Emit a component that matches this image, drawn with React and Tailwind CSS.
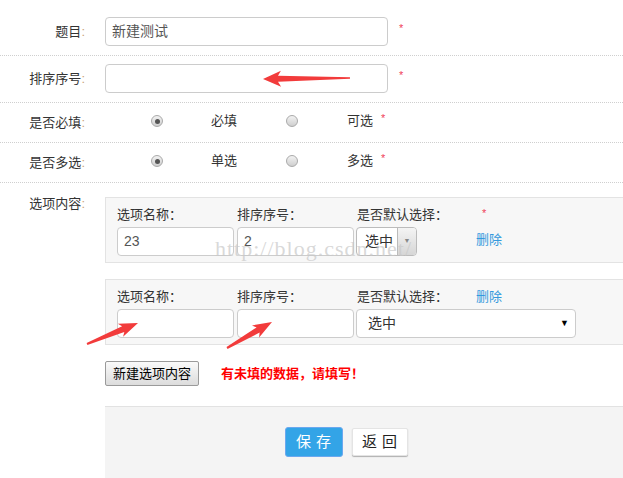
import React from "react";

// red annotation arrow, tail -> tip
function arrowPoints(x1, y1, x2, y2, headLen, headHalf, tailHalf, neckHalf) {
  const dx = x2 - x1;
  const dy = y2 - y1;
  const len = Math.hypot(dx, dy);
  const ux = dx / len;
  const uy = dy / len;
  const nx = -uy;
  const ny = ux;
  const bx = x2 - ux * headLen;
  const by = y2 - uy * headLen;
  const wx = bx - ux * 3;
  const wy = by - uy * 3;
  const p = [
    [x1 + nx * tailHalf, y1 + ny * tailHalf],
    [bx + nx * neckHalf, by + ny * neckHalf],
    [wx + nx * headHalf, wy + ny * headHalf],
    [x2, y2],
    [wx - nx * headHalf, wy - ny * headHalf],
    [bx - nx * neckHalf, by - ny * neckHalf],
    [x1 - nx * tailHalf, y1 - ny * tailHalf],
  ];
  return p.map(([x, y]) => `${x.toFixed(1)},${y.toFixed(1)}`).join(" ");
}

const Star = ({ className = "" }) => (
  <span className={`text-[11px] text-[#f0405a] leading-none ${className}`}>*</span>
);

const Label = ({ children }) => (
  <div className="w-[85px] shrink-0 text-right text-[13px] text-[#333]">
    {children}
    <span className="text-[#c9a27a]">:</span>
  </div>
);

const Radio = ({ checked, className = "" }) => (
  <span
    className={`flex items-center justify-center w-[12px] h-[12px] rounded-full border border-[#aaa] bg-gradient-to-b from-[#f2f2f2] to-[#cfcfcf] ${className}`}
  >
    {checked && <span className="w-[5px] h-[5px] rounded-full bg-[#555]" />}
  </span>
);

const TextBox = ({ value = "", className = "" }) => (
  <div
    className={`h-[29px] border border-[#ccc] rounded-[4px] bg-white flex items-center px-[6px] text-[14px] text-[#555] ${className}`}
  >
    {value}
  </div>
);

const OptionPanel = ({ first, a, b }) => (
  <div className="border border-[#e3e3e3] bg-[#f7f7f7] h-[66px] pl-[11px] pt-[8px]">
    <div className="flex h-[18px] items-center text-[13px] text-[#333]">
      <div className="w-[120px]">选项名称：</div>
      <div className="w-[120px]">排序序号：</div>
      <div className="w-[119px]">是否默认选择：</div>
      {first ? (
        <Star className="ml-[6px] mt-[-4px]" />
      ) : (
        <span className="text-[#3399dd]">删除</span>
      )}
    </div>
    <div className="flex mt-[3px]">
      <TextBox value={a} className="w-[117px]" />
      <TextBox value={b} className="w-[117px] ml-[3px]" />
      {first ? (
        <>
          <div className="ml-[2px] w-[61px] h-[29px] border border-[#bbb] rounded-[4px] bg-white flex overflow-hidden">
            <div className="flex-1 flex items-center pl-[8px] text-[14px] text-[#333]">选中</div>
            <div className="w-[19px] border-l border-[#bbb] bg-gradient-to-b from-[#f4f4f4] to-[#d6d6d6] flex items-center justify-center text-[7px] text-[#888]">
              ▼
            </div>
          </div>
          <span className="ml-[59px] mt-[3px] text-[13px] text-[#3399dd]">删除</span>
        </>
      ) : (
        <div className="ml-[2px] w-[220px] h-[29px] border border-[#ccc] rounded-[4px] bg-white flex items-center justify-between pl-[11px] pr-[6px] text-[14px] text-[#333]">
          <span>选中</span>
          <span className="text-[9px] text-black">▼</span>
        </div>
      )}
    </div>
  </div>
);

export default function App() {
  return (
    <div className="relative w-[623px] h-[478px] bg-white overflow-hidden font-['Liberation_Sans','Noto_Sans_CJK_SC',sans-serif]">
      <div className="pt-[9px]">
        <div className="flex items-center pt-[8px] pb-[9px] border-b border-dotted border-[#cfcfcf]">
          <Label>题目</Label>
          <TextBox value="新建测试" className="ml-[20px] w-[283px]" />
          <Star className="ml-[11px] mt-[-6px]" />
        </div>
        <div className="flex items-center pt-[8px] pb-[9px] border-b border-dotted border-[#cfcfcf]">
          <Label>排序序号</Label>
          <TextBox className="ml-[20px] w-[283px]" />
          <Star className="ml-[11px] mt-[-6px]" />
        </div>
        <div className="flex items-center h-[40px] border-b border-dotted border-[#cfcfcf] text-[13px] text-[#333]">
          <Label>是否必填</Label>
          <Radio checked className="ml-[66px] mt-[-3px]" />
          <span className="ml-[48px] mt-[-4px]">必填</span>
          <Radio className="ml-[49px] mt-[-3px]" />
          <span className="ml-[49px] mt-[-4px]">可选</span>
          <Star className="ml-[8px] mt-[-8px]" />
        </div>
        <div className="flex items-center h-[40px] border-b border-dotted border-[#cfcfcf] text-[13px] text-[#333]">
          <Label>是否多选</Label>
          <Radio checked className="ml-[66px] mt-[-3px]" />
          <span className="ml-[48px] mt-[-4px]">单选</span>
          <Radio className="ml-[49px] mt-[-3px]" />
          <span className="ml-[49px] mt-[-4px]">多选</span>
          <Star className="ml-[8px] mt-[-8px]" />
        </div>
        <div className="flex">
          <div className="pt-[11px]">
            <Label>选项内容</Label>
          </div>
          <div className="ml-[20px] w-[530px] shrink-0 pt-[14px]">
            <OptionPanel first a="23" b="2" />
            <div className="mt-[16px]">
              <OptionPanel />
            </div>
            <div className="flex items-center mt-[16px]">
              <button className="w-[94px] h-[25px] border border-[#9a9a9a] rounded-[2px] bg-gradient-to-b from-[#fafafa] to-[#dcdcdc] text-[13px] text-black">
                新建选项内容
              </button>
              <span className="ml-[22px] text-[13px] font-bold text-[#f00]">有未填的数据，请填写！</span>
            </div>
            <div className="mt-[20px] h-[80px] border-t border-[#e2e2e2] bg-[#f4f4f4] flex items-start pt-[20px] pl-[180px]">
              <button className="w-[58px] h-[30px] rounded-[3px] border border-[#6aa8ef] bg-[#33a4e7] text-white text-[15px] tracking-[5px] pl-[4px]">
                保存
              </button>
              <button className="ml-[9px] mt-[1px] w-[56px] h-[28px] rounded-[2px] border border-[#e4e4e4] bg-white shadow-[0_1px_1px_#b0b0b0] text-[15px] text-[#222] tracking-[5px] pl-[4px]">
                返回
              </button>
            </div>
          </div>
        </div>
      </div>

      <div className="absolute left-[215px] top-[232px] pointer-events-none font-['Liberation_Serif',serif] text-[22px] text-[#c8c8c8]/70 tracking-[1px]">
        http://blog.csdn.net/
      </div>

      <svg className="absolute inset-0 pointer-events-none" width="623" height="478">
        <polygon points={arrowPoints(350, 78, 263, 79, 15, 8, 0.8, 3)} fill="#f23b3b" />
        <polygon points={arrowPoints(87, 344, 138, 323, 16, 7, 1, 3)} fill="#f23b3b" />
        <polygon points={arrowPoints(227, 348, 272, 322, 16, 7, 1, 3)} fill="#f23b3b" />
      </svg>
    </div>
  );
}
